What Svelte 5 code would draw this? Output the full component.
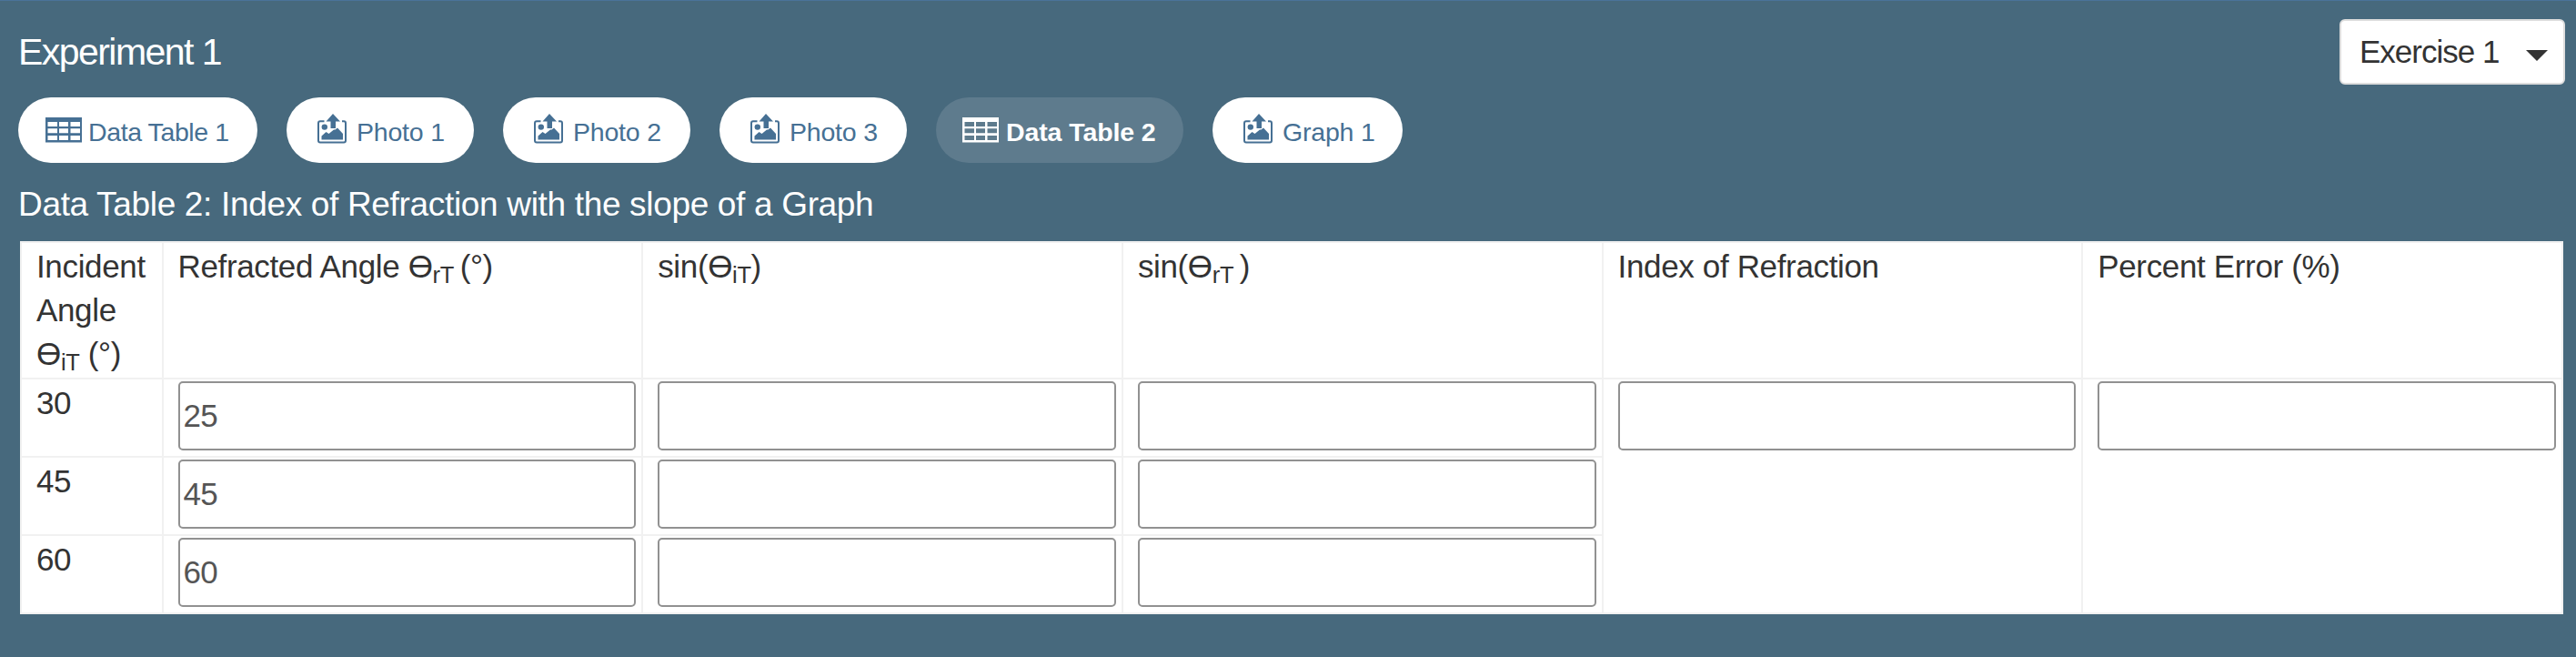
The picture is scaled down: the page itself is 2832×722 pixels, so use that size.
<script lang="ts">
  type Tab = {
    label: string;
    icon: 'table' | 'image';
    size: string;
  };

  const tabs: Tab[] = [
    { label: 'Data Table 1', icon: 'table', size: 'wide' },
    { label: 'Photo 1', icon: 'image', size: 'small' },
    { label: 'Photo 2', icon: 'image', size: 'small' },
    { label: 'Photo 3', icon: 'image', size: 'small' },
    { label: 'Data Table 2', icon: 'table', size: 'widest' },
    { label: 'Graph 1', icon: 'image', size: 'medium' }
  ];

  let active = $state('Data Table 2');

  let rows = $state([
    { angle: 30, refracted: '25', sinI: '', sinR: '' },
    { angle: 45, refracted: '45', sinI: '', sinR: '' },
    { angle: 60, refracted: '60', sinI: '', sinR: '' }
  ]);

  let refractionIndex = $state('');
  let percentError = $state('');
</script>

<div class="lab">
  <header>
    <h1>Experiment 1</h1>
    <button class="dropdown">
      <span>Exercise 1</span>
      <span class="caret"></span>
    </button>
  </header>

  <nav>
    {#each tabs as tab}
      <button
        class="tab {tab.size} {tab.icon}"
        class:active={tab.label === active}
        onclick={() => (active = tab.label)}
      >
        {#if tab.icon === 'table'}
          <svg width="40" height="28" viewBox="0 0 40 28" fill="currentColor">
            <path
              fill-rule="evenodd"
              d="M0 0H40V27.5H0ZM2.5 5V10H13V5ZM15 5V10H25V5ZM27.5 5V10H38V5ZM2.5 12.3V17.3H13V12.3ZM15 12.3V17.3H25V12.3ZM27.5 12.3V17.3H38V12.3ZM2.5 20V25H13V20ZM15 20V25H25V20ZM27.5 20V25H38V20Z"
            />
          </svg>
        {:else}
          <svg width="32" height="33" viewBox="0 0 32 33" fill="currentColor">
            <path
              d="M7.5 8.3H3Q1 8.3 1 10.3V29.5Q1 31.5 3 31.5H29Q31 31.5 31 29.5V10.3Q31 8.3 29 8.3H27"
              fill="none"
              stroke="currentColor"
              stroke-width="2"
            />
            <circle cx="7.8" cy="14.6" r="3.2" />
            <path d="M17 0L25 8.5H20V16H14.5V8.5H9.5Z" />
            <path d="M4.5 28.5V24.5L9.5 20L12.5 22L18 17.5H19.5L22 15.5L28 22V28.5Z" />
          </svg>
        {/if}
        <span>{tab.label}</span>
      </button>
    {/each}
  </nav>

  <h2>Data Table 2: Index of Refraction with the slope of a Graph</h2>

  <table>
    <colgroup>
      <col class="first" />
      <col /><col /><col /><col /><col />
    </colgroup>
    <tbody>
      <tr class="head">
        <td>Incident Angle ϴ<sub>iT</sub> (°)</td>
        <td>Refracted Angle ϴ<sub>rT&nbsp;</sub>(°)</td>
        <td>sin(ϴ<sub>iT</sub>)</td>
        <td>sin(ϴ<sub>rT&nbsp;</sub>)</td>
        <td>Index of Refraction</td>
        <td>Percent Error (%)</td>
      </tr>
      {#each rows as row, i}
        <tr>
          <td>{row.angle}</td>
          <td class="field"><input type="text" bind:value={row.refracted} /></td>
          <td class="field"><input type="text" bind:value={row.sinI} /></td>
          <td class="field"><input type="text" bind:value={row.sinR} /></td>
          {#if i === 0}
            <td class="field" rowspan="3"><input type="text" bind:value={refractionIndex} /></td>
            <td class="field" rowspan="3"><input type="text" bind:value={percentError} /></td>
          {/if}
        </tr>
      {/each}
    </tbody>
  </table>
</div>

<style>
  :global(body) {
    background: #47697d;
  }

  .lab {
    box-sizing: border-box;
    min-height: 722px;
    padding: 20px 12px 0 20px;
    border-top: 1px solid #4a7399;
    background: #47697d;
    font-family: 'Liberation Sans', Arial, sans-serif;
    color: #333;
  }

  button {
    font-family: inherit;
    cursor: pointer;
  }

  header {
    display: flex;
    justify-content: space-between;
    height: 72px;
    margin-bottom: 14px;
  }

  h1 {
    margin: 0;
    color: #fff;
    font-size: 41px;
    font-weight: 400;
    line-height: 72px;
    letter-spacing: -1.55px;
  }

  .dropdown {
    display: flex;
    align-items: center;
    justify-content: space-between;
    box-sizing: border-box;
    width: 248px;
    height: 72px;
    padding: 0 17px 0 20px;
    border: 2px solid #ddd;
    border-radius: 6px;
    background: #fff;
    color: #333;
    font-size: 35px;
    letter-spacing: -1px;
  }

  .caret {
    margin-top: 7px;
    border: 12px solid transparent;
    border-top-color: #333;
    border-bottom: 0;
  }

  nav {
    display: flex;
    gap: 32px;
  }

  .tab {
    display: flex;
    align-items: center;
    box-sizing: border-box;
    height: 72px;
    padding: 4px 0 0 34px;
    border: none;
    border-radius: 36px;
    background: #fff;
    color: #467094;
    font-size: 28.5px;
    letter-spacing: -0.2px;
    white-space: nowrap;
  }

  .tab svg {
    flex: none;
    margin: -7px 11px 0 0;
  }

  .tab.table {
    padding-left: 30px;
    letter-spacing: -0.4px;
  }

  .tab.table svg {
    margin: -4px 7px 0 0;
  }

  .small {
    width: 206px;
  }

  .medium {
    width: 209px;
  }

  .wide {
    width: 263px;
  }

  .widest {
    width: 272px;
  }

  .tab.active {
    padding-left: 29px;
    background: #5e7b8d;
    color: #fff;
    font-weight: 700;
    letter-spacing: -0.1px;
  }

  .tab.active svg {
    margin-right: 8px;
  }

  h2 {
    margin: 24px 0 18px;
    color: #fff;
    font-size: 37px;
    font-weight: 400;
    line-height: 44px;
    letter-spacing: -0.33px;
  }

  table {
    width: 2796px;
    margin-left: 2px;
    table-layout: fixed;
    border-collapse: collapse;
    background: #fff;
    font-size: 35px;
    line-height: 48px;
    letter-spacing: -0.35px;
  }

  .first {
    width: 155.5px;
  }

  tr {
    height: 86px;
  }

  .head {
    height: 150px;
  }

  td {
    padding: 2px 0 0 16px;
    border: 2px solid #f1f1f1;
    vertical-align: top;
  }

  td.field {
    padding: 2px 6px 0 16px;
  }

  sub {
    font-size: 25.5px;
    line-height: 0;
    vertical-align: -6px;
  }

  input {
    display: block;
    box-sizing: border-box;
    width: 100%;
    height: 76px;
    padding: 0 4px;
    border: 2px solid #919191;
    border-radius: 5px;
    background: #fff;
    color: #555;
    font-family: inherit;
    font-size: 35px;
    letter-spacing: -0.6px;
  }
</style>
